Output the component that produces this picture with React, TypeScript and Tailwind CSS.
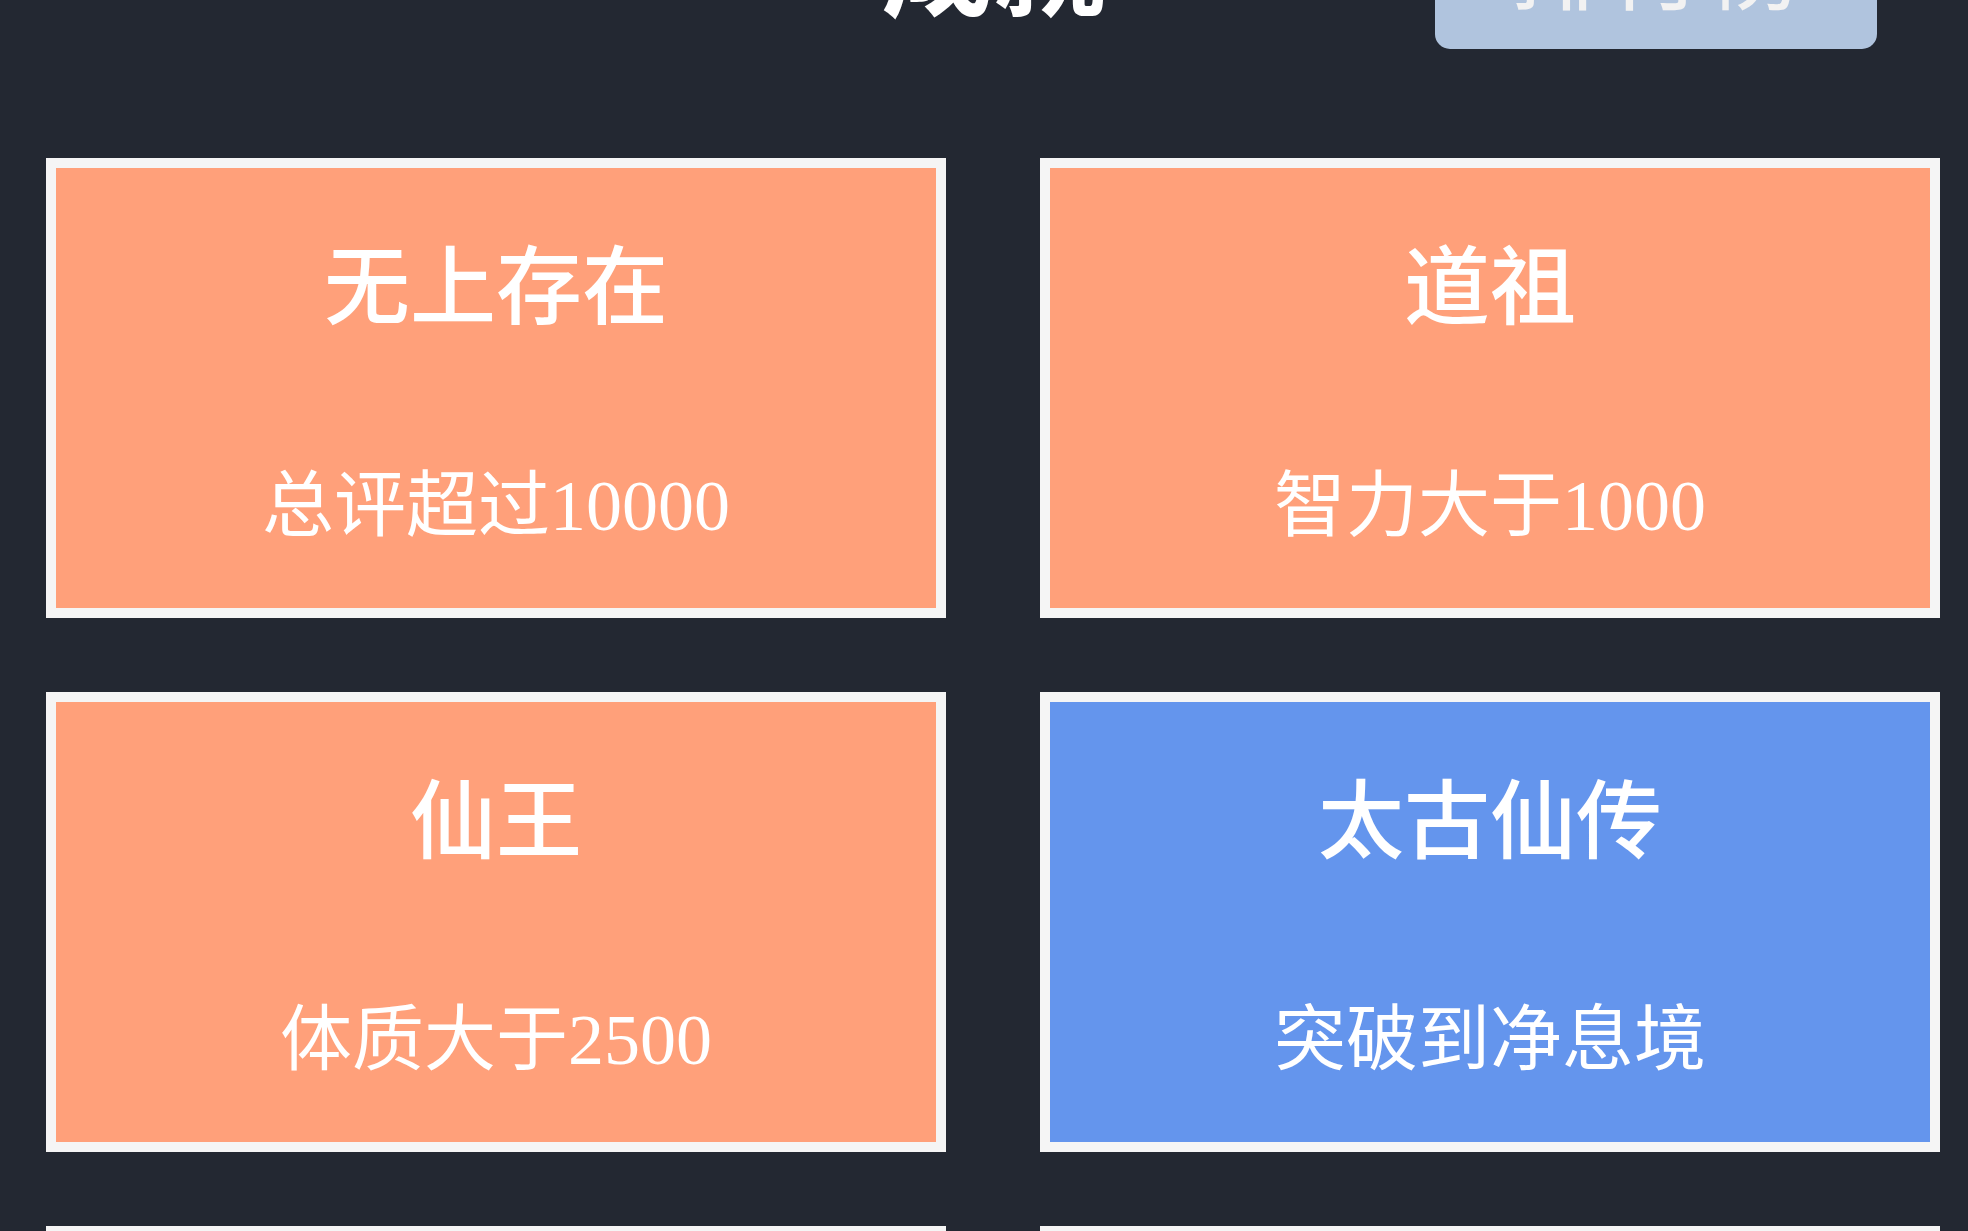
import React from "react";

type Card = { title: string; desc: string; color: "orange" | "blue" };

const cards: Card[] = [
  { title: "无上存在", desc: "总评超过10000", color: "orange" },
  { title: "道祖", desc: "智力大于1000", color: "orange" },
  { title: "仙王", desc: "体质大于2500", color: "orange" },
  { title: "太古仙传", desc: "突破到净息境", color: "blue" },
  { title: "", desc: "", color: "orange" },
  { title: "", desc: "", color: "orange" },
];

function AchievementCard({ card }: { card: Card }) {
  return (
    <div
      className={
        "h-[460px] border-[10px] border-[#f5f5f5] flex flex-col items-center text-white " +
        (card.color === "blue" ? "bg-[#6495ed]" : "bg-[#ffa07a]")
      }
    >
      <div className="mt-[78px] text-[86px] leading-none font-medium whitespace-nowrap">
        {card.title}
      </div>
      <div className="mt-auto mb-[66px] text-[72px] leading-none font-normal whitespace-nowrap">
        {card.desc}
      </div>
    </div>
  );
}

export default function App() {
  return (
    <div
      className="h-[1231px] overflow-hidden bg-[#232832] pl-[46px] pr-[28px]"
      style={{ fontFamily: '"Liberation Serif", "Noto Sans CJK SC", serif' }}
    >
      <div className="grid grid-cols-[1fr_auto_1fr] items-start h-[248px] -mt-[90px]">
        <div />
        <div className="mt-[4px] text-[112px] leading-none font-bold text-white whitespace-nowrap">
          成就
        </div>
        <div className="flex justify-end pr-[63px]">
          <div className="w-[442px] h-[139px] rounded-[15px] bg-[#b0c4de] flex justify-center pt-[10px]">
            <span className="text-[98px] leading-none text-[#f2f2f2] whitespace-nowrap">排行榜</span>
          </div>
        </div>
      </div>
      <div className="grid grid-cols-2 gap-x-[94px] gap-y-[74px]">
        {cards.map((c, i) => (
          <AchievementCard key={i} card={c} />
        ))}
      </div>
    </div>
  );
}
